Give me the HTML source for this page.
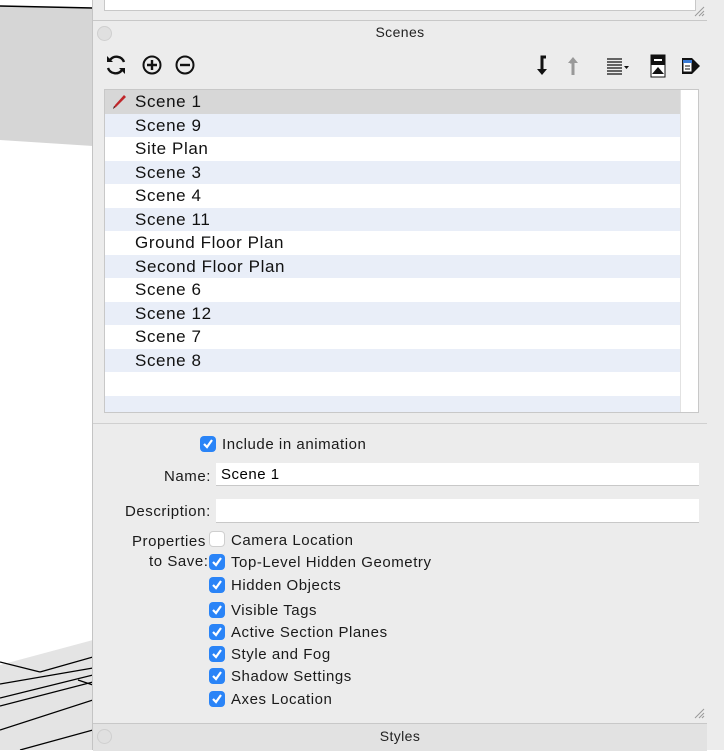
<!DOCTYPE html>
<html><head><style>
body{margin:0;width:724px;height:750px;overflow:hidden;background:#fff;font-family:"Liberation Sans",sans-serif;position:relative}
.abs{position:absolute}
.row{position:absolute;left:0;width:575px;height:23.5px;font-size:17px;line-height:23.5px;padding-left:30px;box-sizing:border-box;color:#111;letter-spacing:0.6px}
.cb{position:absolute;width:16px;height:16px;border-radius:4px;background:#2a84f7;box-sizing:border-box}
.cb svg{position:absolute;left:2px;top:2px}
.lbl{position:absolute;font-size:15px;color:#1a1a1a;letter-spacing:0.55px}
</style></head><body>
<svg class="abs" style="left:0;top:0" width="93" height="750">
<polygon points="0,6 93,8 93,146 0,140" fill="#d6d6d6"/>
<line x1="0" y1="6" x2="93" y2="8" stroke="#000" stroke-width="1.5"/>
<polygon points="0,665 93,640 93,750 0,750" fill="#e4e4e4"/>
<g stroke="#000" stroke-width="1.3" fill="none">
<line x1="0" y1="662" x2="40" y2="672"/><line x1="40" y1="672" x2="93" y2="657"/>
<line x1="0" y1="684" x2="93" y2="668"/><line x1="0" y1="698" x2="93" y2="675"/>
<line x1="0" y1="706" x2="93" y2="682"/><line x1="78" y1="680" x2="93" y2="685"/>
<line x1="0" y1="730" x2="93" y2="700"/><line x1="20" y1="750" x2="93" y2="730"/>
</g></svg>
<div class="abs" style="left:707px;top:0;width:17px;height:750px;background:#ececec;border-left:1px solid #c8c8c8"></div>
<div class="abs" style="left:92px;top:0;width:615px;height:750px;background:#ececec;border-left:1px solid #c4c4c4"></div>
<div class="abs" style="left:104px;top:0;width:590px;height:10px;background:#fff;border:1px solid #c8c8c8;border-top:none"></div>
<div class="abs" style="left:93px;top:20px;width:614px;height:1px;background:#c8c8c8"></div>
<div class="abs" style="left:97px;top:26px;width:13px;height:13px;border-radius:50%;background:#e0e0e0;border:1px solid #cfcfcf"></div>
<div class="abs" style="left:93px;top:24px;width:614px;text-align:center;font-size:14px;color:#222;letter-spacing:0.4px">Scenes</div>
<svg class="abs" style="left:105px;top:54px" width="100" height="22">
<g fill="none" stroke="#111" stroke-width="2.4">
<path d="M19 8a8 8 0 0 0-14-2"/><path d="M3 14a8 8 0 0 0 14 2"/>
<circle cx="47" cy="11" r="8.5" stroke-width="2"/><path d="M42 11h10M47 6v10"/>
<circle cx="80" cy="11" r="8.5" stroke-width="2"/><path d="M75 11h10"/></g>
<path d="M2 2v6h6z" fill="#111"/><path d="M20 20v-6h-6z" fill="#111"/>
</svg>
<svg class="abs" style="left:530px;top:52px" width="175" height="28">
<path d="M16 5h-4v13" stroke="#111" stroke-width="3" fill="none"/><path d="M7 17h10l-5 6z" fill="#111"/>
<path d="M43 23v-13h-3" stroke="#999" stroke-width="3" fill="none"/><path d="M38 11h10l-5-6z" fill="#999"/>
<g stroke="#111" stroke-width="1.3"><path d="M77 7h15M77 10h15M77 13h15M77 16h15M77 19h15M77 22h15"/></g><path d="M94 14h5l-2.5 3z" fill="#111"/>
<rect x="121" y="3" width="14" height="22" fill="#fff" stroke="#111"/><rect x="121" y="3" width="14" height="10" fill="#111"/><rect x="124" y="7" width="8" height="2" fill="#fff"/><path d="M122 22l6-7 6 7z" fill="#111"/>
<path d="M152 6h10l8 8-8 8h-10z" fill="#111"/><rect x="153" y="8" width="9" height="12" fill="#fff" stroke="#111"/><rect x="153" y="8" width="9" height="3" fill="#3a7bd5"/><path d="M155 14h5M155 17h5" stroke="#111"/>
</svg>
<div class="abs" style="left:104px;top:89px;width:593px;height:322px;background:#fff;border:1px solid #c8c8c8;overflow:hidden">
<div class="abs" style="left:575px;top:0;width:1px;height:322px;background:#e2e2e2"></div>
<div class="row" style="top:0;background:#d7d7d7">Scene 1</div>
<div class="row" style="top:23.5px;background:#e9eef8">Scene 9</div>
<div class="row" style="top:47px">Site Plan</div>
<div class="row" style="top:70.5px;background:#e9eef8">Scene 3</div>
<div class="row" style="top:94px">Scene 4</div>
<div class="row" style="top:117.5px;background:#e9eef8">Scene 11</div>
<div class="row" style="top:141px">Ground Floor Plan</div>
<div class="row" style="top:164.5px;background:#e9eef8">Second Floor Plan</div>
<div class="row" style="top:188px">Scene 6</div>
<div class="row" style="top:211.5px;background:#e9eef8">Scene 12</div>
<div class="row" style="top:235px">Scene 7</div>
<div class="row" style="top:258.5px;background:#e9eef8">Scene 8</div>
<div class="row" style="top:305.5px;background:#e9eef8"></div>
<svg class="abs" style="left:6px;top:4px" width="16" height="16"><path d="M2 15l2-4 9-10 2 2-10 10z" fill="#c0262a"/><path d="M2 15l1-3 1 1z" fill="#222"/></svg>
</div>
<div class="abs" style="left:93px;top:423px;width:614px;height:1px;background:#d0d0d0"></div>
<div class="cb" style="left:200px;top:436px"><svg width="12" height="12"><path d="M2 6l3 3 5-7" stroke="#fff" stroke-width="2.2" fill="none"/></svg></div>
<div class="lbl" style="left:222px;top:436px">Include in animation</div>
<div class="lbl" style="left:164px;top:468px">Name:</div>
<div class="abs" style="left:216px;top:463px;width:483px;height:23px;background:#fff;border-bottom:1px solid #c8c8c8;font-size:15px;line-height:24px;padding-left:5px;box-sizing:border-box;letter-spacing:0.5px">Scene 1</div>
<div class="lbl" style="left:125px;top:503px">Description:</div>
<div class="abs" style="left:216px;top:499px;width:483px;height:23px;background:#fff;border-bottom:1px solid #c8c8c8"></div>
<div class="lbl" style="left:132px;top:533px">Properties</div>
<div class="lbl" style="left:149px;top:553px">to Save:</div>
<div class="abs" style="left:209px;top:531px;width:16px;height:16px;border-radius:4px;background:#fff;border:1px solid #cfcfcf;box-sizing:border-box"></div>
<div class="lbl" style="left:231px;top:532px">Camera Location</div>
<div class="cb" style="left:209px;top:554px"><svg width="12" height="12"><path d="M2 6l3 3 5-7" stroke="#fff" stroke-width="2.2" fill="none"/></svg></div><div class="lbl" style="left:231px;top:554px">Top-Level Hidden Geometry</div>
<div class="cb" style="left:209px;top:577px"><svg width="12" height="12"><path d="M2 6l3 3 5-7" stroke="#fff" stroke-width="2.2" fill="none"/></svg></div><div class="lbl" style="left:231px;top:577px">Hidden Objects</div>
<div class="cb" style="left:209px;top:602px"><svg width="12" height="12"><path d="M2 6l3 3 5-7" stroke="#fff" stroke-width="2.2" fill="none"/></svg></div><div class="lbl" style="left:231px;top:602px">Visible Tags</div>
<div class="cb" style="left:209px;top:624px"><svg width="12" height="12"><path d="M2 6l3 3 5-7" stroke="#fff" stroke-width="2.2" fill="none"/></svg></div><div class="lbl" style="left:231px;top:624px">Active Section Planes</div>
<div class="cb" style="left:209px;top:646px"><svg width="12" height="12"><path d="M2 6l3 3 5-7" stroke="#fff" stroke-width="2.2" fill="none"/></svg></div><div class="lbl" style="left:231px;top:646px">Style and Fog</div>
<div class="cb" style="left:209px;top:668px"><svg width="12" height="12"><path d="M2 6l3 3 5-7" stroke="#fff" stroke-width="2.2" fill="none"/></svg></div><div class="lbl" style="left:231px;top:668px">Shadow Settings</div>
<div class="cb" style="left:209px;top:691px"><svg width="12" height="12"><path d="M2 6l3 3 5-7" stroke="#fff" stroke-width="2.2" fill="none"/></svg></div><div class="lbl" style="left:231px;top:691px">Axes Location</div>
<svg class="abs" style="left:693px;top:707px" width="12" height="12"><path d="M11 2L2 11M11 6L6 11M11 9L9 11" stroke="#999"/></svg>
<svg class="abs" style="left:693px;top:5px" width="12" height="12"><path d="M11 2L2 11M11 6L6 11M11 9L9 11" stroke="#999"/></svg>
<div class="abs" style="left:93px;top:723px;width:614px;height:27px;background:#e2e2e2;border-top:1px solid #c8c8c8"></div>
<div class="abs" style="left:97px;top:729px;width:13px;height:13px;border-radius:50%;background:#e0e0e0;border:1px solid #cfcfcf"></div>
<div class="abs" style="left:93px;top:728px;width:614px;text-align:center;font-size:14px;color:#222;letter-spacing:0.4px">Styles</div>
</body></html>
